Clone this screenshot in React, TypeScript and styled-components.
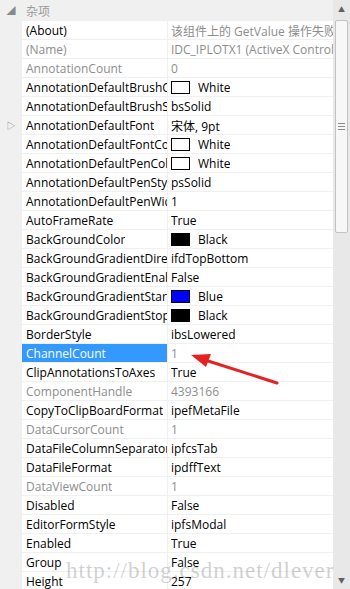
import React from "react";
import styled, { createGlobalStyle } from "styled-components";

const GlobalStyle = createGlobalStyle`
  html, body {
    margin: 0;
    padding: 0;
    background: #ffffff;
  }
  body {
    font-family: "Open Sans", "Noto Sans CJK SC", sans-serif;
  }
`;

type Prop = {
  name: string;
  value: string;
  readOnly?: boolean;
  swatch?: string;
  expandable?: boolean;
  selected?: boolean;
};

const props: Prop[] = [
  { name: "(About)", value: "该组件上的 GetValue 操作失败", readOnly: false },
  { name: "(Name)", value: "IDC_IPLOTX1 (ActiveX Control)", readOnly: true },
  { name: "AnnotationCount", value: "0", readOnly: true },
  { name: "AnnotationDefaultBrushColor", value: "White", swatch: "#ffffff" },
  { name: "AnnotationDefaultBrushStyle", value: "bsSolid" },
  { name: "AnnotationDefaultFont", value: "宋体, 9pt", expandable: true },
  { name: "AnnotationDefaultFontColor", value: "White", swatch: "#ffffff" },
  { name: "AnnotationDefaultPenColor", value: "White", swatch: "#ffffff" },
  { name: "AnnotationDefaultPenStyle", value: "psSolid" },
  { name: "AnnotationDefaultPenWidth", value: "1" },
  { name: "AutoFrameRate", value: "True" },
  { name: "BackGroundColor", value: "Black", swatch: "#000000" },
  { name: "BackGroundGradientDirection", value: "ifdTopBottom" },
  { name: "BackGroundGradientEnabled", value: "False" },
  { name: "BackGroundGradientStart", value: "Blue", swatch: "#0000ff" },
  { name: "BackGroundGradientStop", value: "Black", swatch: "#000000" },
  { name: "BorderStyle", value: "ibsLowered" },
  { name: "ChannelCount", value: "1", readOnly: true, selected: true },
  { name: "ClipAnnotationsToAxes", value: "True" },
  { name: "ComponentHandle", value: "4393166", readOnly: true },
  { name: "CopyToClipBoardFormat", value: "ipefMetaFile" },
  { name: "DataCursorCount", value: "1", readOnly: true },
  { name: "DataFileColumnSeparator", value: "ipfcsTab" },
  { name: "DataFileFormat", value: "ipdffText" },
  { name: "DataViewCount", value: "1", readOnly: true },
  { name: "Disabled", value: "False" },
  { name: "EditorFormStyle", value: "ipfsModal" },
  { name: "Enabled", value: "True" },
  { name: "Group", value: "False" },
  { name: "Height", value: "257" },
];

const Window = styled.div`
  position: relative;
  width: 350px;
  height: 589px;
  overflow: hidden;
  display: flex;
  background: #ffffff;
`;

const Grid = styled.div`
  flex: 1;
  display: flex;
  flex-direction: column;
  min-width: 0;
`;

const CategoryRow = styled.div`
  height: 21px;
  flex-shrink: 0;
  display: flex;
  align-items: center;
  background: #f0f0f0;
  font-size: 12px;
  color: #9a9a9a;
`;

const Gutter = styled.div`
  width: 22px;
  flex-shrink: 0;
  align-self: stretch;
  display: flex;
  align-items: center;
  justify-content: center;
  background: #f0f0f0;
  font-size: 9px;
  color: #8a8a8a;
`;

const CategoryLabel = styled.span`
  padding-left: 4px;
`;

const Row = styled.div`
  height: 19px;
  flex-shrink: 0;
  display: flex;
`;

const Text = styled.span`
  overflow: hidden;
  text-overflow: clip;
  white-space: nowrap;
  min-width: 0;
`;

const NameCell = styled.div<{ $readOnly?: boolean; $selected?: boolean }>`
  width: 146px;
  flex-shrink: 0;
  box-sizing: border-box;
  padding: 1px 0 0 4px;
  display: flex;
  align-items: center;
  overflow: hidden;
  font-size: 12px;
  border-bottom: 1px solid #f0f0f0;
  border-right: 1px solid #f0f0f0;
  background: ${(p) => (p.$selected ? "#3399ff" : "#ffffff")};
  color: ${(p) => (p.$selected ? "#ffffff" : p.$readOnly ? "#8d8d8d" : "#000000")};
`;

const ValueCell = styled.div<{ $readOnly?: boolean }>`
  flex: 1;
  min-width: 0;
  box-sizing: border-box;
  padding: 1px 0 0 3px;
  display: flex;
  align-items: center;
  gap: 8px;
  overflow: hidden;
  font-size: 12px;
  border-bottom: 1px solid #f0f0f0;
  color: ${(p) => (p.$readOnly ? "#8d8d8d" : "#000000")};
`;

const Swatch = styled.span<{ $color: string }>`
  width: 19px;
  height: 13px;
  flex-shrink: 0;
  box-sizing: border-box;
  border: 1px solid #000000;
  background: ${(p) => p.$color};
`;

const ScrollBar = styled.div`
  width: 17px;
  flex-shrink: 0;
  display: flex;
  flex-direction: column;
  align-items: center;
  background: #e8e8e8;
`;

const ArrowButton = styled.div`
  height: 18px;
  flex-shrink: 0;
  display: flex;
  align-items: center;
  justify-content: center;
  font-size: 7px;
  color: #606060;
`;

const Thumb = styled.div`
  width: 13px;
  height: 213px;
  box-sizing: border-box;
  margin-top: 2px;
  background: #f7f7f7;
  border: 1px solid #c2c2c2;
  border-radius: 2px;
  display: flex;
  align-items: center;
  justify-content: center;
`;

const Track = styled.div`
  flex: 1;
`;

const Grip = styled.div`
  width: 7px;
  height: 5px;
  border-top: 1px solid #8a8a8a;
  border-bottom: 1px solid #8a8a8a;
  position: relative;
  &::after {
    content: "";
    position: absolute;
    left: 0;
    right: 0;
    top: 2px;
    border-top: 1px solid #8a8a8a;
  }
`;

const Watermark = styled.div`
  position: absolute;
  left: 66px;
  top: 558px;
  font-family: "Liberation Serif", serif;
  font-size: 23px;
  letter-spacing: 1px;
  color: rgba(120, 120, 120, 0.35);
  white-space: nowrap;
  pointer-events: none;
`;

const Annotation = styled.svg`
  position: absolute;
  left: 185px;
  top: 346px;
  pointer-events: none;
`;

export default function App() {
  return (
    <Window>
      <GlobalStyle />
      <Grid>
        <CategoryRow>
          <Gutter>◢</Gutter>
          <CategoryLabel>杂项</CategoryLabel>
        </CategoryRow>
        {props.map((p) => (
          <Row key={p.name}>
            <Gutter>{p.expandable ? "▷" : null}</Gutter>
            <NameCell $readOnly={p.readOnly} $selected={p.selected}>
              <Text>{p.name}</Text>
            </NameCell>
            <ValueCell $readOnly={p.readOnly || p.name === "(About)"}>
              {p.swatch && <Swatch $color={p.swatch} />}
              <Text>{p.value}</Text>
            </ValueCell>
          </Row>
        ))}
      </Grid>
      <ScrollBar>
        <ArrowButton>▲</ArrowButton>
        <Thumb>
          <Grip />
        </Thumb>
        <Track />
        <ArrowButton>▼</ArrowButton>
      </ScrollBar>
      <Annotation width="100" height="45" viewBox="0 0 100 45">
        <line x1="92" y1="37" x2="20" y2="14" stroke="#e52222" strokeWidth="3" strokeLinecap="round" />
        <polygon points="6,9 26,8 21,21" fill="#e52222" />
      </Annotation>
      <Watermark>http://blog.csdn.net/dlever</Watermark>
    </Window>
  );
}
